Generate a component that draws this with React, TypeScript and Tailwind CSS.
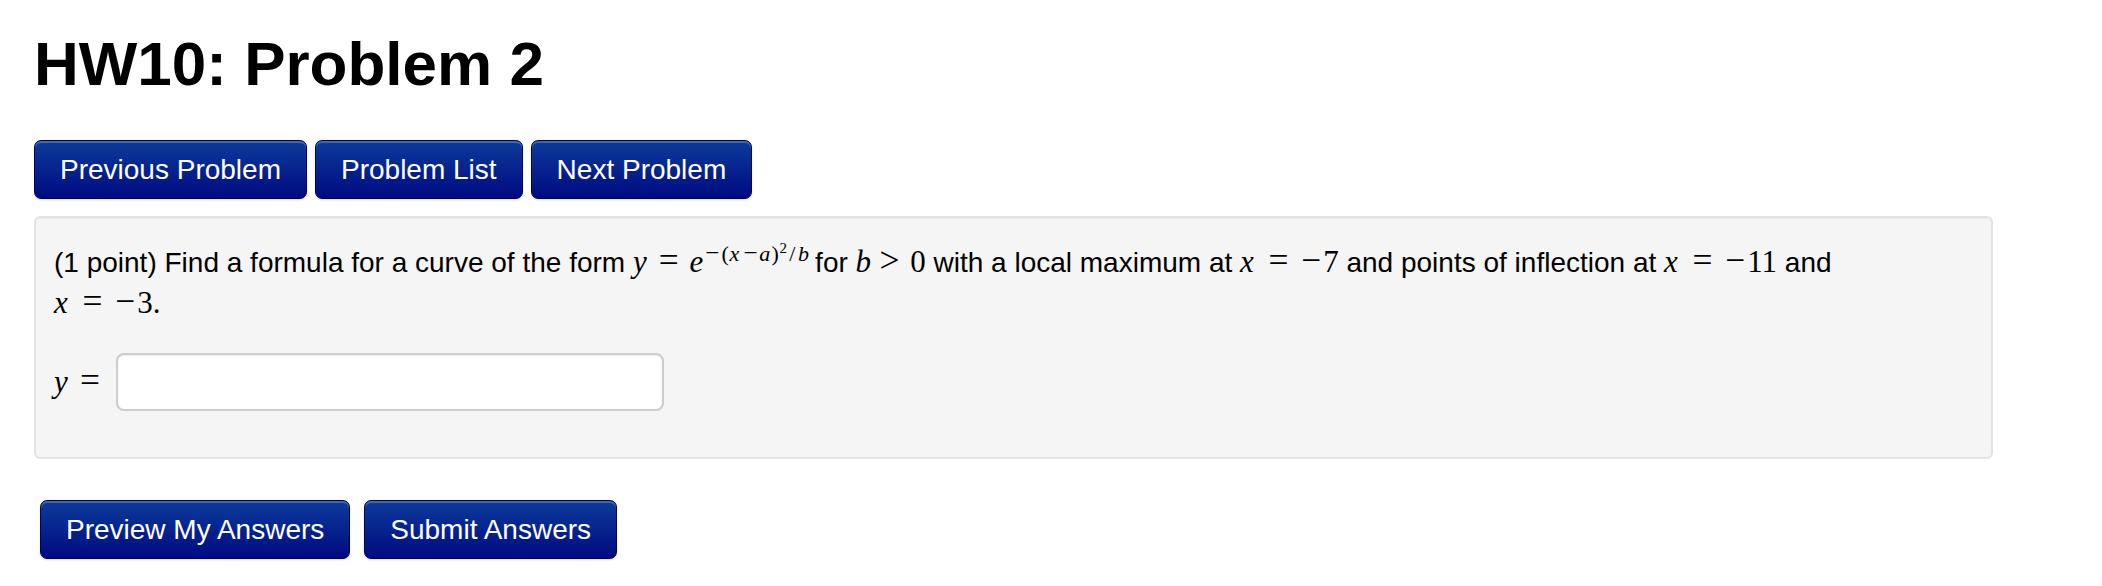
import React from 'react';

/* ----------------------------------
   Small pieces
----------------------------------- */

const btnClass =
  "rounded-[7px] border border-[#00064d] bg-[linear-gradient(to_bottom,#0c3c9a,#000a82)] px-[25px] py-[11px] text-[28px] leading-[35px] text-white shadow-[inset_0_2px_0_rgba(255,255,255,0.22),0_1px_2px_rgba(0,0,0,0.15)]";

const Btn: React.FC<{ label: string }> = ({ label }) => (
  <button type="button" className={btnClass}>
    {label}
  </button>
);

// inline math, typeset with a serif face and TeX-like glyph widths
const M: React.FC<{ children: React.ReactNode }> = ({ children }) => (
  <span className="font-['Liberation_Serif',serif] text-[31px]">{children}</span>
);

const VAR_W: Record<string, string> = {
  x: 'w-[0.572em]',
  y: 'w-[0.49em]',
  e: 'w-[0.466em]',
  a: 'w-[0.529em]',
  b: 'w-[0.429em]',
};

const V: React.FC<{ c: string }> = ({ c }) => (
  <i className={`inline-block italic ${VAR_W[c]}`}>{c}</i>
);

// TeX operators are drawn a little larger than the text face's
const Op: React.FC<{ c: string }> = ({ c }) => (
  <span className="text-[1.14em] leading-none">{c}</span>
);

// relation with thick space on both sides
const Rel: React.FC<{ op: string }> = ({ op }) => (
  <span className="mx-[0.278em] inline-block w-[0.778em] text-center">
    <Op c={op} />
  </span>
);

const Minus: React.FC = () => (
  <span className="inline-block w-[0.778em] text-center">
    <Op c="−" />
  </span>
);

const Paren: React.FC<{ c: string }> = ({ c }) => (
  <span className="inline-block w-[0.389em] text-center">{c}</span>
);

/* ----------------------------------
   Page
----------------------------------- */

export default function App() {
  return (
    <div className="min-h-[586px] bg-white pl-[34px] pt-[30px] font-['Liberation_Sans',Arial,sans-serif] text-black">
      <h1 className="text-[62px] font-bold leading-[68px]">HW10: Problem 2</h1>

      <div className="mt-[42px] flex gap-2">
        <Btn label="Previous Problem" />
        <Btn label="Problem List" />
        <Btn label="Next Problem" />
      </div>

      <div className="mt-[17px] w-[1959px] rounded-[6px] border-2 border-[#e3e3e3] bg-[#f5f5f5] px-[18px] pb-[46px] pt-[24px] shadow-[inset_0_1px_1px_rgba(0,0,0,0.05)]">
        <p className="text-[28px] leading-[40px]">
          <span className="whitespace-nowrap">
            (1 point) Find a formula for a curve of the form{' '}
            <M>
              <V c="y" />
              <Rel op="=" />
              <V c="e" />
              <span className="relative -top-[11px] text-[22px] leading-none">
                <Minus />
                <Paren c="(" />
                <V c="x" />
                <Minus />
                <V c="a" />
                <Paren c=")" />
                <span className="relative -top-[8px] text-[15px]">2</span>
                <span className="inline-block w-[0.5em] text-center">/</span>
                <V c="b" />
              </span>
            </M>{' '}
            for{' '}
            <M>
              <V c="b" />
              <Rel op=">" />0
            </M>{' '}
            with a local maximum at{' '}
            <M>
              <V c="x" />
              <Rel op="=" />
              <Minus />7
            </M>{' '}
            and points of inflection at{' '}
            <M>
              <V c="x" />
              <Rel op="=" />
              <Minus />11
            </M>{' '}
            and
          </span>
          <br />
          <M>
            <V c="x" />
            <Rel op="=" />
            <Minus />3.
          </M>
        </p>

        <div className="mt-[29px] flex items-center gap-[14px]">
          <M>
            <V c="y" />
            <span className="ml-[0.278em] inline-block w-[0.778em] text-center">
              <Op c="=" />
            </span>
          </M>
          <input
            type="text"
            className="h-[58px] w-[548px] rounded-[8px] border-2 border-[#cccccc] bg-white px-3 text-[28px] shadow-[inset_0_1px_2px_rgba(0,0,0,0.08)] outline-none"
          />
        </div>
      </div>

      <div className="ml-[6px] mt-[41px] flex gap-[14px]">
        <Btn label="Preview My Answers" />
        <Btn label="Submit Answers" />
      </div>
    </div>
  );
}
